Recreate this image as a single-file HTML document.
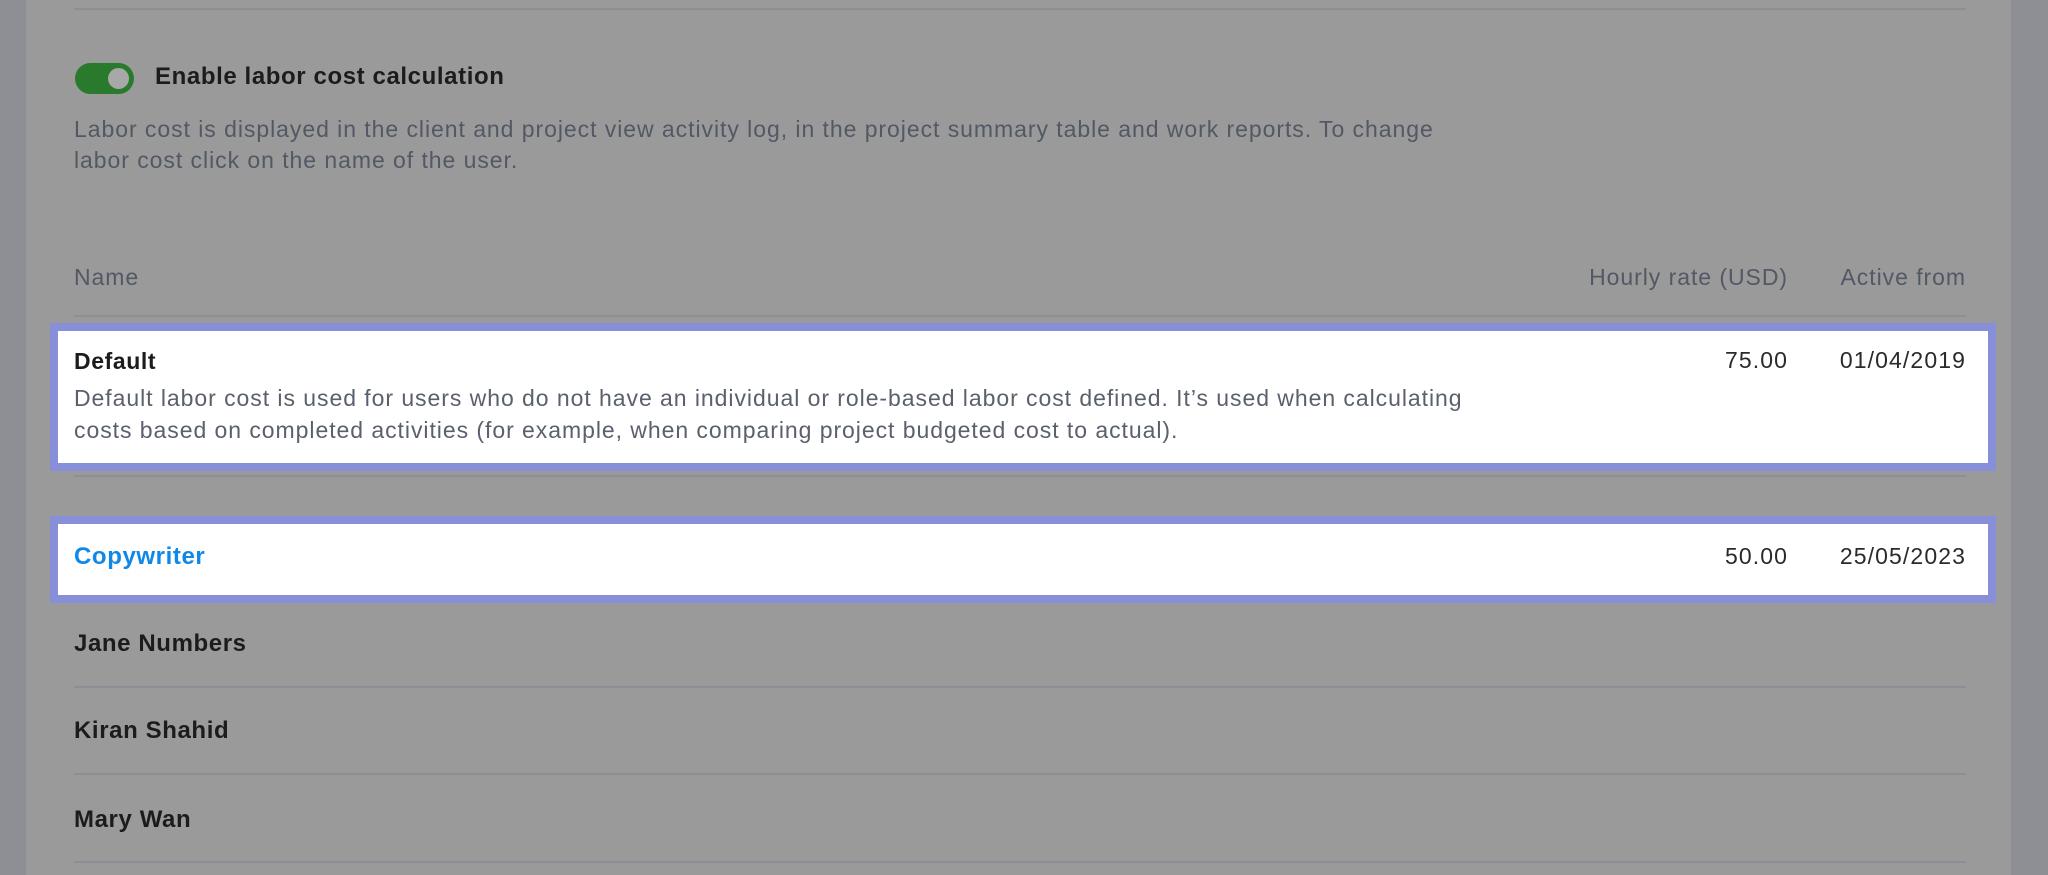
<!DOCTYPE html>
<html><head><meta charset="utf-8"><style>
*{margin:0;padding:0;box-sizing:border-box}
body{width:2048px;height:875px;background:#9a9a9a;font-family:"Liberation Sans",sans-serif;position:relative;overflow:hidden}
.lb{position:absolute;left:0;top:0;width:26px;height:875px;background:#8e8f94}
.rb{position:absolute;left:2011px;top:0;width:37px;height:875px;background:#8e8f94}
.ln{position:absolute;left:74px;width:1892px;height:2px;background:#8d8f96}
.t{position:absolute;white-space:nowrap}
.toggle{position:absolute;left:75px;top:63px;width:59px;height:31px;border-radius:16px;background:#2a7a2d}
.toggle:after{content:"";position:absolute;right:5px;top:5px;width:21px;height:21px;border-radius:50%;background:#a8a8a8}
.box{position:absolute;left:50px;width:1946px;border:8px solid #878fd9;background:#fff}
.g{color:#525864;font-size:23px;letter-spacing:0.95px}
.b{color:#1c1c1c;font-weight:bold;font-size:24px;letter-spacing:0.6px}
.n{color:#2a2a2a;font-size:23px;letter-spacing:1.1px}
</style></head><body>
<div class="lb"></div><div class="rb"></div>
<div class="ln" style="top:8px"></div>
<div class="toggle"></div>
<div class="t b" style="left:155px;top:63px">Enable labor cost calculation</div>
<div class="t g" style="left:74px;top:114px;line-height:31px">Labor cost is displayed in the client and project view activity log, in the project summary table and work reports. To change<br>labor cost click on the name of the user.</div>
<div class="t g" style="left:74px;top:264px">Name</div>
<div class="t g" style="right:260px;top:264px">Hourly rate (USD)</div>
<div class="t g" style="right:82px;top:264px">Active from</div>
<div class="ln" style="top:315px"></div>
<div class="box" style="top:323px;height:148px"></div>
<div class="t b" style="left:74px;top:348px;font-size:23px">Default</div>
<div class="t g" style="left:74px;top:382px;line-height:32px;color:#5a606c">Default labor cost is used for users who do not have an individual or role-based labor cost defined. It’s used when calculating<br>costs based on completed activities (for example, when comparing project budgeted cost to actual).</div>
<div class="t n" style="right:260px;top:347px">75.00</div>
<div class="t n" style="right:82px;top:347px">01/04/2019</div>
<div class="ln" style="top:475px"></div>
<div class="box" style="top:516px;height:87px"></div>
<div class="t b" style="left:74px;top:543px;color:#0f88e8">Copywriter</div>
<div class="t n" style="right:260px;top:543px">50.00</div>
<div class="t n" style="right:82px;top:543px">25/05/2023</div>
<div class="t b" style="left:74px;top:630px">Jane Numbers</div>
<div class="ln" style="top:686px"></div>
<div class="t b" style="left:74px;top:717px">Kiran Shahid</div>
<div class="ln" style="top:773px"></div>
<div class="t b" style="left:74px;top:806px">Mary Wan</div>
<div class="ln" style="top:861px"></div>
</body></html>
